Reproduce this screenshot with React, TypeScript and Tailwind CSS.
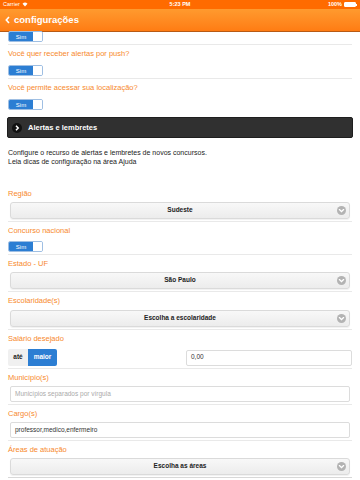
import type { ReactNode } from 'react'

const FONT = { fontFamily: '"Liberation Sans", Arial, sans-serif' }

function Toggle() {
  return (
    <div className="flex h-[11px] w-[35px] overflow-hidden rounded-[2px] border border-[#9fbfe3] bg-white">
      <div className="flex flex-1 items-center justify-center bg-[#2c7ed3] text-[6px] leading-none text-white">Sim</div>
      <div className="w-[9px] bg-white" />
    </div>
  )
}

function Chevron() {
  return (
    <svg width="9" height="9" viewBox="0 0 10 10">
      <circle cx="5" cy="5" r="5" fill="#b3b3b3" />
      <path d="M2.7 4 L5 6.3 L7.3 4" stroke="#fff" strokeWidth="1.5" fill="none" strokeLinecap="round" />
    </svg>
  )
}

function Select({ value }: { value: string }) {
  return (
    <div className="mx-[2px] flex h-[17px] items-center rounded-[3px] border border-[#dadada] bg-gradient-to-b from-[#f8f8f8] to-[#ececec] pr-[3px] shadow-[0_1px_1px_rgba(0,0,0,0.06)]">
      <span className="flex-1 pl-[12px] text-center text-[6.5px] font-bold leading-none text-[#222]">{value}</span>
      <Chevron />
    </div>
  )
}

function Input({ value, placeholder }: { value?: string; placeholder?: string }) {
  return (
    <div className="mx-[2px] flex h-[16px] items-center rounded-[2px] border border-[#dcdcdc] bg-white px-[4px] text-[6.5px] leading-none">
      {value ? <span className="text-[#333]">{value}</span> : <span className="text-[#aaa]">{placeholder}</span>}
    </div>
  )
}

function Field({ label, children, first, gap = 'mt-[3px]' }: { label: string; children: ReactNode; first?: boolean; gap?: string }) {
  return (
    <div className={`pt-[4px] pb-[2px] ${first ? '' : 'border-t border-[#e9e9e9]'}`}>
      <div className="h-[10px] text-[7.5px] leading-[10px] text-[#f7892c]">{label}</div>
      <div className={gap}>{children}</div>
    </div>
  )
}

export default function App() {
  return (
    <div className="h-[480px] w-[360px] overflow-hidden bg-white" style={FONT}>
      {/* status bar */}
      <div className="relative flex h-[9px] items-center bg-[#ff6b00] px-[3px] text-[5.5px] leading-none text-white">
        <span>Carrier</span>
        <svg className="ml-[2px]" width="6" height="5" viewBox="0 0 12 10">
          <path d="M6 9 L1 3.5 A7 7 0 0 1 11 3.5 Z" fill="#fff" />
        </svg>
        <span className="absolute left-1/2 -translate-x-1/2 font-bold">5:23 PM</span>
        <span className="ml-auto font-bold">100%</span>
        <div className="ml-[2px] flex items-center">
          <div className="h-[5px] w-[12px] rounded-[1px] border border-white bg-white" />
          <div className="h-[2px] w-[1px] bg-white" />
        </div>
      </div>

      {/* nav bar */}
      <div className="flex h-[23px] items-center border-b border-[#b85a14] bg-gradient-to-b from-[#ff9a2e] to-[#ff7c12] pl-[5px] text-white">
        <svg width="5" height="8" viewBox="0 0 5 8">
          <path d="M4 1 L1.3 4 L4 7" stroke="#fff" strokeWidth="1.6" fill="none" />
        </svg>
        <span className="ml-[4px] text-[9.5px] font-bold leading-none">configurações</span>
      </div>

      <div className="px-[8px]">
        <div className="-mt-[1px] pb-[2px]">
          <Toggle />
        </div>
        <Field label="Você quer receber alertas por push?" gap="mt-[6px]">
          <Toggle />
        </Field>
        <Field label="Você permite acessar sua localização?" gap="mt-[6px]">
          <Toggle />
        </Field>

        <div className="-mx-[1px] mt-[5px] flex h-[21px] items-center rounded-[2px] border border-[#1e1e1e] bg-[#303030] pl-[4px]">
          <svg width="10" height="10" viewBox="0 0 10 10">
            <circle cx="5" cy="5" r="5" fill="#111" />
            <path d="M4 2.8 L6.2 5 L4 7.2" stroke="#fff" strokeWidth="1.5" fill="none" />
          </svg>
          <span className="ml-[6px] text-[7.5px] font-bold leading-none text-white">Alertas e lembretes</span>
        </div>

        <p className="mt-[10px] text-[7px] leading-[9px] text-[#222]">
          Configure o recurso de alertas e lembretes de novos concursos.
          <br />
          Leia dicas de configuração na área Ajuda
        </p>

        <div className="mt-[19px]">
          <Field label="Região" first>
            <Select value="Sudeste" />
          </Field>
          <Field label="Concurso nacional" gap="mt-[5px]">
            <Toggle />
          </Field>
          <Field label="Estado - UF">
            <Select value="São Paulo" />
          </Field>
          <Field label="Escolaridade(s)" gap="mt-[4px]">
            <Select value="Escolha a escolaridade" />
          </Field>
          <Field label="Salário desejado" gap="mt-[5px]">
            <div className="flex items-center">
              <div className="flex h-[17px] overflow-hidden rounded-[2px] text-[6.5px] font-bold leading-none">
                <div className="flex w-[20px] items-center justify-center bg-[#f0f0f0] text-[#222]">até</div>
                <div className="flex w-[29px] items-center justify-center bg-[#2c7ed3] text-white">maior</div>
              </div>
              <div className="ml-auto flex h-[16px] w-[166px] items-center rounded-[2px] border border-[#dcdcdc] bg-white px-[4px] text-[6.5px] leading-none text-[#333]">
                0,00
              </div>
            </div>
          </Field>
          <Field label="Município(s)">
            <Input placeholder="Municípios separados por vírgula" />
          </Field>
          <Field label="Cargo(s)">
            <Input value="professor,medico,enfermeiro" />
          </Field>
          <Field label="Áreas de atuação">
            <Select value="Escolha as áreas" />
          </Field>
          <div className="border-t border-[#d8d8d8]" />
        </div>
      </div>
    </div>
  )
}
